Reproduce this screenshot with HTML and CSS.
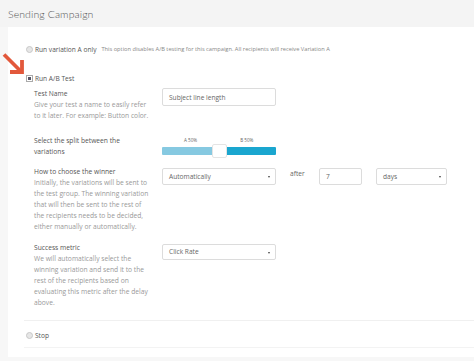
FILE: index.html
```html
<!DOCTYPE html>
<html>
<head>
<meta charset="utf-8">
<link rel="stylesheet" href="styles.css">
</head>
<body>
<div class="page">
  <header class="head"><h1>Sending Campaign</h1></header>
  <main class="panel">
    <svg class="arrow" width="24" height="24" viewBox="0 0 24 24">
      <path d="M2 2.5 L18 18.5" stroke="#e2583b" stroke-width="3.8" fill="none" stroke-linecap="butt"/>
      <path d="M8 20 H20 V8" stroke="#e2583b" stroke-width="3.8" fill="none" stroke-linecap="butt" stroke-linejoin="miter"/>
    </svg>
    <div class="opt opt-a">
      <span class="radio"></span>
      <span class="opt-label">Run variation A only</span>
      <span class="note">This option disables A/B testing for this campaign. All recipients will receive Variation A</span>
    </div>
    <div class="opt opt-ab">
      <span class="check"></span>
      <span class="opt-label">Run A/B Test</span>
    </div>
    <div class="form">
      <div class="row row-name">
        <div class="lbl">
          <div class="title">Test Name</div>
          <div class="desc">Give your test a name to easily refer<br>to it later. For example: Button color.</div>
        </div>
        <div class="ctl"><div class="input wide">Subject line length</div></div>
      </div>
      <div class="row row-split">
        <div class="lbl">
          <div class="title">Select the split between the<br>variations</div>
        </div>
        <div class="ctl">
          <div class="split-labels"><span>A 50%</span><span>B 50%</span></div>
          <div class="slider">
            <span class="seg seg-a"></span>
            <span class="handle"></span>
            <span class="seg seg-b"></span>
          </div>
        </div>
      </div>
      <div class="row row-win">
        <div class="lbl">
          <div class="title">How to choose the winner</div>
          <div class="desc">Initially, the variations will be sent to<br>the test group. The winning variation<br>that will then be sent to the rest of<br>the recipients needs to be decided,<br>either manually or automatically.</div>
        </div>
        <div class="ctl inline">
          <div class="input wide select">Automatically<span class="caret"></span></div>
          <span class="after">after</span>
          <div class="input num">7</div>
          <div class="input days select">days<span class="caret"></span></div>
        </div>
      </div>
      <div class="row row-metric">
        <div class="lbl">
          <div class="title">Success metric</div>
          <div class="desc">We will automatically select the<br>winning variation and send it to the<br>rest of the recipients based on<br>evaluating this metric after the delay<br>above.</div>
        </div>
        <div class="ctl"><div class="input wide select">Click Rate<span class="caret"></span></div></div>
      </div>
    </div>
    <div class="opt opt-stop">
      <span class="radio"></span>
      <span class="opt-label">Stop</span>
    </div>
  </main>
</div>
</body>
</html>
```
FILE: styles.css
```css
html, body {
  margin: 0;
  padding: 0;
}
body {
  width: 474px;
  height: 361px;
  overflow: hidden;
  background: #f7f7f7;
  font-family: "Open Sans", "Liberation Sans", sans-serif;
  color: #666;
}
.page {
  display: flex;
  flex-direction: column;
  height: 361px;
}
.head {
  height: 27px;
  background: #f4f4f4;
  display: flex;
  align-items: center;
  padding-left: 8px;
}
.head h1 {
  margin: 0;
  font-family: "Lato", "Open Sans", sans-serif;
  font-weight: 300;
  font-size: 10.5px;
  color: #555;
  letter-spacing: 0.1px;
}
.panel {
  position: relative;
  margin-left: 8px;
  background: #fff;
  height: 330px;
  padding-left: 16px;
}
.arrow {
  position: absolute;
  left: -6px;
  top: 25px;
}
.opt {
  display: flex;
  align-items: center;
  height: 10px;
  font-size: 6.6px;
  color: #555;
}
.opt-a {
  margin-top: 17px;
  padding-left: 2px;
}
.opt-ab {
  margin-top: 19px;
  padding-left: 2px;
}
.radio {
  width: 5px;
  height: 5px;
  border-radius: 50%;
  background: #e6e6e6;
  border: 0.6px solid #c8c8c8;
  margin-right: 2px;
  flex: none;
}
.check {
  width: 5px;
  height: 5px;
  border: 0.6px solid #aaa;
  background: #fff;
  margin-right: 2px;
  flex: none;
  display: flex;
  align-items: center;
  justify-content: center;
}
.check::after {
  content: "";
  width: 3px;
  height: 3px;
  background: #556;
}
.note {
  font-size: 5.7px;
  color: #888;
  margin-left: 5px;
}
.form {
  padding-left: 10px;
  margin-top: 5px;
}
.row {
  display: grid;
  grid-template-columns: 128px 1fr;
}
.lbl {
  white-space: nowrap;
}
.title {
  font-size: 6.7px;
  color: #555;
  line-height: 11px;
}
.desc {
  font-size: 6.7px;
  color: #999;
  line-height: 11px;
}
.row-split { margin-top: 14px; }
.row-win { margin-top: 8px; }
.row-metric { margin-top: 10px; }
.input {
  box-sizing: border-box;
  height: 17px;
  border: 0.8px solid #dcdcdc;
  border-radius: 2px;
  background: #fff;
  font-size: 6.6px;
  color: #666;
  display: flex;
  align-items: center;
  padding-left: 6px;
  position: relative;
}
.wide { width: 114px; }
.row-name .input { height: 18px; }
.select .caret {
  position: absolute;
  right: 5px;
  top: 7px;
  width: 0;
  height: 0;
  border-left: 1.5px solid transparent;
  border-right: 1.5px solid transparent;
  border-top: 2px solid #444;
}
.split-labels {
  display: flex;
  font-size: 4.6px;
  color: #666;
  height: 9px;
  align-items: center;
}
.split-labels span:first-child { margin-left: 22px; }
.split-labels span:last-child { margin-left: 43px; }
.slider {
  display: flex;
  align-items: center;
  height: 14px;
  width: 114px;
}
.seg {
  height: 8px;
}
.seg-a {
  width: 50px;
  background: #86c9e1;
  border-radius: 1px 0 0 1px;
}
.seg-b {
  flex: 1;
  background: #1aa6cf;
  border-radius: 0 1px 1px 0;
}
.handle {
  width: 15px;
  height: 14px;
  box-sizing: border-box;
  background: #fff;
  border: 0.6px solid #e4e4e4;
  border-radius: 2px;
}
.inline {
  display: flex;
  align-items: flex-start;
  margin-top: 2px;
}
.after {
  font-size: 6.6px;
  color: #666;
  margin-left: 14px;
  margin-top: 1px;
  width: 29px;
}
.num { width: 43px; }
.days { width: 71px; margin-left: 14px; }
.row-metric .ctl { margin-top: 1.5px; }
.row-metric .input { height: 16px; }
.opt-stop {
  margin-top: 12px;
  border-top: 0.8px solid #f0f0f0;
  border-bottom: 0.8px solid #f3f3f3;
  height: 24px;
  padding-left: 2px;
  padding-top: 2px;
  box-sizing: content-box;
}
```
